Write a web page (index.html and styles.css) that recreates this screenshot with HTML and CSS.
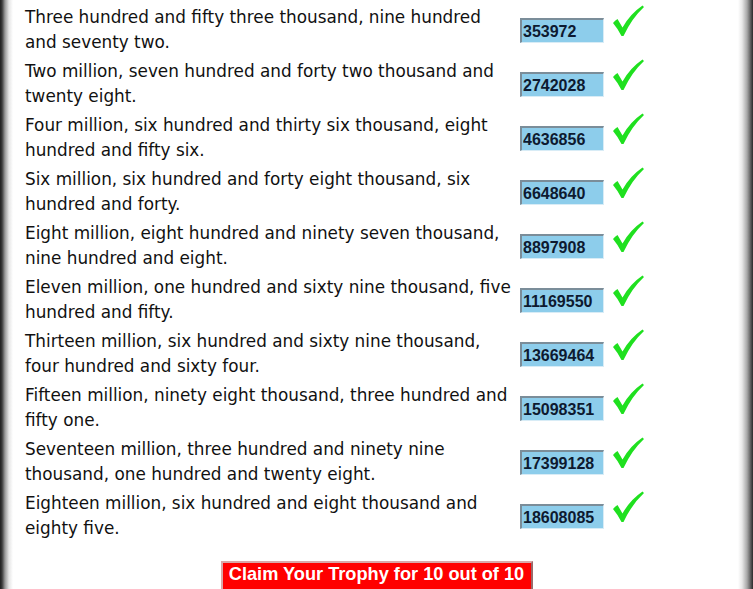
FILE: index.html
```html
<!DOCTYPE html>
<html>
<head>
<meta charset="utf-8">
<link rel="stylesheet" href="styles.css">
</head>
<body>
<div class="page">
  <div class="quiz">
    <div class="row"><div class="words">Three hundred and fifty three thousand, nine hundred and seventy two.</div><input class="answer" value="353972" readonly><span class="tick"><svg viewBox="0 0 32 32"><path d="M1,18 Q3,15.5 5.5,14 L10.5,22.5 Q18,9 30.5,0.5 L32,2 Q20,13 11.5,31 L9.5,31 Q6,24 1,18 Z"/></svg></span></div>
    <div class="row"><div class="words">Two million, seven hundred and forty two thousand and twenty eight.</div><input class="answer" value="2742028" readonly><span class="tick"><svg viewBox="0 0 32 32"><path d="M1,18 Q3,15.5 5.5,14 L10.5,22.5 Q18,9 30.5,0.5 L32,2 Q20,13 11.5,31 L9.5,31 Q6,24 1,18 Z"/></svg></span></div>
    <div class="row"><div class="words">Four million, six hundred and thirty six thousand, eight hundred and fifty six.</div><input class="answer" value="4636856" readonly><span class="tick"><svg viewBox="0 0 32 32"><path d="M1,18 Q3,15.5 5.5,14 L10.5,22.5 Q18,9 30.5,0.5 L32,2 Q20,13 11.5,31 L9.5,31 Q6,24 1,18 Z"/></svg></span></div>
    <div class="row"><div class="words">Six million, six hundred and forty eight thousand, six hundred and forty.</div><input class="answer" value="6648640" readonly><span class="tick"><svg viewBox="0 0 32 32"><path d="M1,18 Q3,15.5 5.5,14 L10.5,22.5 Q18,9 30.5,0.5 L32,2 Q20,13 11.5,31 L9.5,31 Q6,24 1,18 Z"/></svg></span></div>
    <div class="row"><div class="words">Eight million, eight hundred and ninety seven thousand, nine hundred and eight.</div><input class="answer" value="8897908" readonly><span class="tick"><svg viewBox="0 0 32 32"><path d="M1,18 Q3,15.5 5.5,14 L10.5,22.5 Q18,9 30.5,0.5 L32,2 Q20,13 11.5,31 L9.5,31 Q6,24 1,18 Z"/></svg></span></div>
    <div class="row"><div class="words">Eleven million, one hundred and sixty nine thousand, five hundred and fifty.</div><input class="answer" value="11169550" readonly><span class="tick"><svg viewBox="0 0 32 32"><path d="M1,18 Q3,15.5 5.5,14 L10.5,22.5 Q18,9 30.5,0.5 L32,2 Q20,13 11.5,31 L9.5,31 Q6,24 1,18 Z"/></svg></span></div>
    <div class="row"><div class="words">Thirteen million, six hundred and sixty nine thousand, four hundred and sixty four.</div><input class="answer" value="13669464" readonly><span class="tick"><svg viewBox="0 0 32 32"><path d="M1,18 Q3,15.5 5.5,14 L10.5,22.5 Q18,9 30.5,0.5 L32,2 Q20,13 11.5,31 L9.5,31 Q6,24 1,18 Z"/></svg></span></div>
    <div class="row"><div class="words">Fifteen million, ninety eight thousand, three hundred and fifty one.</div><input class="answer" value="15098351" readonly><span class="tick"><svg viewBox="0 0 32 32"><path d="M1,18 Q3,15.5 5.5,14 L10.5,22.5 Q18,9 30.5,0.5 L32,2 Q20,13 11.5,31 L9.5,31 Q6,24 1,18 Z"/></svg></span></div>
    <div class="row"><div class="words">Seventeen million, three hundred and ninety nine thousand, one hundred and twenty eight.</div><input class="answer" value="17399128" readonly><span class="tick"><svg viewBox="0 0 32 32"><path d="M1,18 Q3,15.5 5.5,14 L10.5,22.5 Q18,9 30.5,0.5 L32,2 Q20,13 11.5,31 L9.5,31 Q6,24 1,18 Z"/></svg></span></div>
    <div class="row"><div class="words">Eighteen million, six hundred and eight thousand and eighty five.</div><input class="answer" value="18608085" readonly><span class="tick"><svg viewBox="0 0 32 32"><path d="M1,18 Q3,15.5 5.5,14 L10.5,22.5 Q18,9 30.5,0.5 L32,2 Q20,13 11.5,31 L9.5,31 Q6,24 1,18 Z"/></svg></span></div>
  </div>
  <div class="actions"><button class="claim">Claim Your Trophy for 10 out of 10</button></div>
</div>
</body>
</html>
```
FILE: styles.css
```css
html, body {
  margin: 0;
  padding: 0;
}
body {
  width: 753px;
  height: 589px;
  overflow: hidden;
  background: #fff;
}
.page {
  height: 589px;
  box-sizing: border-box;
  padding: 5px 0 0 25px;
  background:
    linear-gradient(to right, #1e1e1e 0, #3a3a3a 2px, #9a9a9a 5px, #e6e6e6 9px, #fff 13px, #fff 738px, #e8e8e8 742px, #a8a8a8 747px, #555 751px, #2a2a2a 753px);
  font-family: "DejaVu Sans", sans-serif;
  color: #111;
}
.quiz {
  display: flex;
  flex-direction: column;
  gap: 4px;
}
.row {
  display: grid;
  grid-template-columns: 488px 84px 32px;
  column-gap: 7px;
  align-items: center;
  height: 50px;
}
.words {
  font-size: 16.85px;
  line-height: 25px;
}
.answer {
  box-sizing: border-box;
  width: 84px;
  height: 25px;
  margin: 0;
  padding: 2px 0 0 1px;
  background: #8dcdeb;
  border-style: solid;
  border-width: 2px 1px 1px 2px;
  border-color: #7b8d99 #d8ecf6 #d8ecf6 #7b8d99;
  font-family: "Liberation Sans", Arial, sans-serif;
  font-weight: bold;
  font-size: 16px;
  color: #0d1a30;
  outline: none;
}
.tick {
  align-self: start;
  display: block;
  width: 32px;
  height: 32px;
  margin-top: 0;
  margin-left: 1px;
}
.tick svg {
  display: block;
  width: 32px;
  height: 32px;
  fill: #1fe01f;
}
.actions {
  display: flex;
  justify-content: center;
  margin: 20px 0 0 -25px;
}
.claim {
  width: 312px;
  height: 30px;
  margin: 0;
  padding: 0 0 4px;
  background: #ff0000;
  border-style: solid;
  border-width: 2px;
  border-color: #d9a8a8 #9a6a6a #9a6a6a #d9a8a8;
  color: #fff;
  font-family: "Liberation Sans", Arial, sans-serif;
  font-weight: bold;
  font-size: 18.2px;
  text-align: center;
}
```
